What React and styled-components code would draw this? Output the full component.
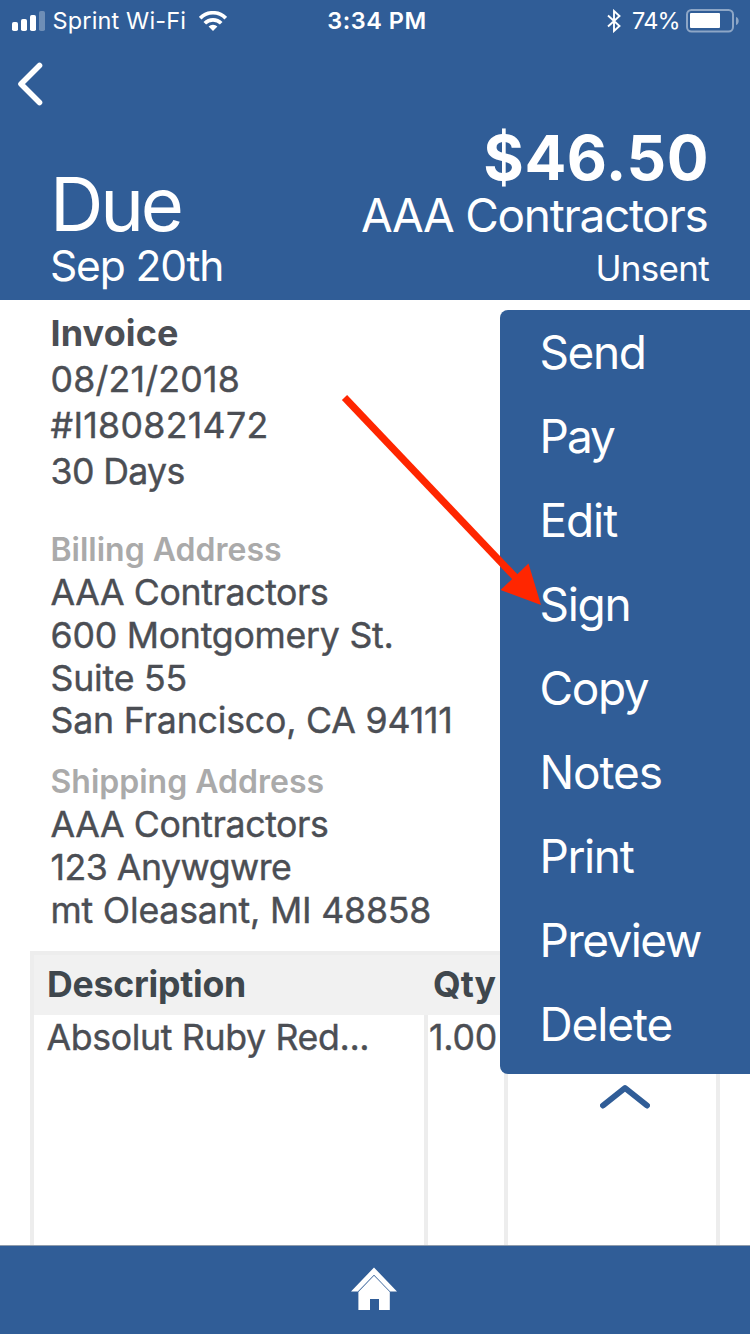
import styled, { createGlobalStyle } from 'styled-components';

const menuItems = [
    { label: 'Send', spacing: -1.4 },
    { label: 'Pay', spacing: -2 },
    { label: 'Edit', spacing: -1.1 },
    { label: 'Sign', spacing: -1.3 },
    { label: 'Copy', spacing: -1.4 },
    { label: 'Notes', spacing: -1.1 },
    { label: 'Print', spacing: -1.4 },
    { label: 'Preview', spacing: -1.6 },
    { label: 'Delete', spacing: -1.1 },
];

const App = () => {
    return (
        <>
            <GlobalStyle />
            <Page>
                <Header>
                    <StatusBar>
                        <Carrier>
                            <SignalIcon />
                            <Text size={23.5} line={40} spacing={0.15}>Sprint Wi-Fi</Text>
                            <WifiIcon />
                        </Carrier>
                        <Clock size={23.5} line={40} weight={600} spacing={0.5}>3:34 PM</Clock>
                        <Battery>
                            <BluetoothIcon />
                            <Text size={23.5} line={40} spacing={-0.7}>74%</Text>
                            <BatteryIcon />
                        </Battery>
                    </StatusBar>
                    <BackButton aria-label="Back">
                        <svg width="28" height="44" viewBox="0 0 28 44">
                            <path d="M23.5 3.5L5 22L23.5 40.5" fill="none" stroke="#fff" strokeWidth="5.6" strokeLinecap="round" strokeLinejoin="round" />
                        </svg>
                    </BackButton>
                    <Summary>
                        <DueDate>
                            <Text size={74} line={76} spacing={-3.2}>Due</Text>
                            <Text size={42.5} line={48} spacing={-1.15}>Sep 20th</Text>
                        </DueDate>
                        <Totals>
                            <Text size={62} line={60} weight={700} spacing={0.5}>$46.50</Text>
                            <Client size={46} line={55} spacing={-1.3}>AAA Contractors</Client>
                            <Text size={35} line={51} spacing={-0.7}>Unsent</Text>
                        </Totals>
                    </Summary>
                </Header>
                <Body>
                    <Block>
                        <Text size={36} line={46} weight={700} spacing={0.1}>Invoice</Text>
                        <BodyText line={46} spacing={0.2}>08/21/2018</BodyText>
                        <BodyText line={46} spacing={0.3}>#I180821472</BodyText>
                        <BodyText line={46} spacing={-0.65}>30 Days</BodyText>
                    </Block>
                    <Block gap={34}>
                        <Label>Billing Address</Label>
                        <BodyText spacing={-0.4}>AAA Contractors</BodyText>
                        <BodyText spacing={-0.25}>600 Montgomery St.</BodyText>
                        <BodyText spacing={-0.2}>Suite 55</BodyText>
                        <BodyText spacing={-0.2}>San Francisco, CA 94111</BodyText>
                    </Block>
                    <Block gap={18}>
                        <Label>Shipping Address</Label>
                        <BodyText spacing={-0.4}>AAA Contractors</BodyText>
                        <BodyText spacing={-0.5}>123 Anywgwre</BodyText>
                        <BodyText spacing={-0.2}>mt Oleasant, MI 48858</BodyText>
                    </Block>
                    <Table>
                        <HeadRow>
                            <HeadCell pad={13}><Text size={35.7} line={58} weight={700} spacing={-0.25}>Description</Text></HeadCell>
                            <HeadCell pad={9}><Text size={35.7} line={58} weight={700} spacing={0}>Qty</Text></HeadCell>
                            <HeadCell />
                        </HeadRow>
                        <ItemRow>
                            <Cell pad={12.5}><BodyText line={44} spacing={-0.35}>Absolut Ruby Red...</BodyText></Cell>
                            <Cell pad={1}><BodyText line={44} spacing={-0.2}>1.00</BodyText></Cell>
                            <Cell />
                        </ItemRow>
                    </Table>
                    <Menu>
                        <MenuList>
                            {menuItems.map(item => (
                                <MenuItem key={item.label} spacing={item.spacing}>{item.label}</MenuItem>
                            ))}
                        </MenuList>
                        <Collapse aria-label="Collapse menu">
                            <svg width="50" height="26" viewBox="0 0 50 26">
                                <path d="M3 21.5L25 4L47 21.5" fill="none" stroke="#305d97" strokeWidth="6" strokeLinecap="round" strokeLinejoin="round" />
                            </svg>
                        </Collapse>
                    </Menu>
                    <Arrow width="210" height="220" viewBox="340 390 210 220">
                        <path d="M344.5 397.5L516 578" stroke="#ff2600" strokeWidth="7.2" />
                        <path d="M528.5 563.5L541 605L500.5 590Z" fill="#ff2600" />
                    </Arrow>
                </Body>
                <Footer>
                    <svg width="48" height="44" viewBox="0 0 48 44">
                        <path d="M24 .5L1 24.5H7.8L24 7.8L40.2 24.5H47Z" fill="#fff" />
                        <path d="M24 8.8L8.4 25V43H20V32H29V43H39.8V25Z" fill="#fff" />
                    </svg>
                </Footer>
            </Page>
        </>
    )
}

const SignalIcon = () => (
    <svg width="33" height="20" viewBox="0 0 33 20">
        <g fill="#fff">
            <rect x="0" y="11" width="6" height="9" rx="1.8" />
            <rect x="9" y="8" width="6" height="12" rx="1.8" />
            <rect x="18" y="4" width="6" height="16" rx="1.8" />
            <rect x="27" y="0" width="6" height="20" rx="1.8" opacity=".3" />
        </g>
    </svg>
)

const WifiIcon = () => (
    <svg width="28" height="20" viewBox="0 0 28 20">
        <g fill="none" stroke="#fff" strokeWidth="3.7">
            <path d="M1.2 7.1A18 18 0 0 1 26.8 7.1" />
            <path d="M5.8 12.2A11.6 11.6 0 0 1 22.2 12.2" />
        </g>
        <path d="M9.6 15.6A6.2 6.2 0 0 1 18.4 15.6L14 20Z" fill="#fff" />
    </svg>
)

const BluetoothIcon = () => (
    <svg width="14" height="24" viewBox="0 0 14 24">
        <path d="M1 6.5L12.5 17L7 22V2L12.5 7L1 17.5" fill="none" stroke="#fff" strokeWidth="1.9" />
    </svg>
)

const BatteryIcon = () => (
    <svg width="54" height="24" viewBox="0 0 54 24">
        <rect x="1" y="1" width="46" height="21.5" rx="4.5" fill="none" stroke="#fff" strokeWidth="2" opacity=".45" />
        <rect x="4" y="4" width="30" height="15" rx="1" fill="#fff" />
        <path d="M50 8C53.6 9 53.6 15 50 16Z" fill="#fff" opacity=".45" />
    </svg>
)

const GlobalStyle = createGlobalStyle`
    body {
        margin: 0;
        background: #fff;
    }
`;

const Page = styled.div`
    display: flex;
    flex-direction: column;
    width: 750px;
    height: 1334px;
    overflow: hidden;
    font-family: Inter, "Liberation Sans", sans-serif;
    color: #4b4e54;
`;

const Text = styled.div.withConfig({
    shouldForwardProp: prop => !['size', 'line', 'weight', 'spacing'].includes(prop)
})`
    font-size: ${props => props.size}px;
    line-height: ${props => props.line}px;
    font-weight: ${props => props.weight || 400};
    letter-spacing: ${props => props.spacing}px;
    white-space: nowrap;
`;

const BodyText = styled(Text)`
    font-size: 35.7px;
    line-height: ${props => props.line || 42.75}px;
    -webkit-text-stroke: 0.4px currentColor;
`;

const Clock = styled(Text)`
    padding-left: 2px;
`;

const Client = styled(Text)`
    padding-right: 1.5px;
`;

const Header = styled.header`
    height: 300px;
    flex-shrink: 0;
    box-sizing: border-box;
    background: #305d97;
    color: #fff;
`;

const StatusBar = styled.div`
    display: grid;
    grid-template-columns: 1fr auto 1fr;
    align-items: center;
    height: 40px;
    padding: 0 10px 0 12px;
    ${Text} {
        padding-top: 1px;
    }
`;

const Carrier = styled.div`
    display: flex;
    align-items: center;
    gap: 7.5px;
    svg:last-child {
        margin-left: 5px;
    }
`;

const Battery = styled.div`
    display: flex;
    align-items: center;
    justify-content: flex-end;
    gap: 6px;
    ${Text} {
        margin-left: 5px;
    }
`;

const BackButton = styled.button`
    display: flex;
    align-items: center;
    height: 88px;
    padding: 0 0 0 16px;
    border: 0;
    background: none;
`;

const Summary = styled.div`
    display: flex;
    justify-content: space-between;
    padding: 0 41px 0 50px;
`;

const DueDate = styled.div`
    padding-top: 38px;
`;

const Totals = styled.div`
    text-align: right;
`;

const Body = styled.main`
    position: relative;
    flex: 1;
    display: flex;
    flex-direction: column;
    padding-top: 10px;
`;

const Block = styled.section.withConfig({
    shouldForwardProp: prop => prop !== 'gap'
})`
    margin-top: ${props => props.gap || 0}px;
    padding-left: 50.5px;
`;

const Label = styled.div`
    font-size: 32px;
    line-height: 43px;
    font-weight: 600;
    color: #aaa;
`;

const Table = styled.div`
    display: flex;
    flex-direction: column;
    flex: 1;
    width: 690px;
    margin: 20px 0 0 30px;
    box-sizing: border-box;
    border: solid #ededed;
    border-width: 4px 4px 0;
`;

const HeadRow = styled.div`
    display: grid;
    grid-template-columns: 390px 80px 1fr;
    height: 60px;
    background: #f1f1f1;
    color: #3f474d;
`;

const ItemRow = styled(HeadRow)`
    flex: 1;
    background: #fff;
    color: #4b4e54;
`;

const HeadCell = styled.div.withConfig({
    shouldForwardProp: prop => prop !== 'pad'
})`
    padding-left: ${props => props.pad || 0}px;
`;

const Cell = styled(HeadCell)`
    border-right: 4px solid #ededed;
    &:first-child {
        margin-right: -4px;
    }
    &:nth-child(2) {
        margin: 0 -4px 0 4px;
    }
    &:last-child {
        border-right: 0;
    }
`;

const Menu = styled.nav`
    position: absolute;
    top: 10px;
    right: 0;
    width: 250px;
`;

const MenuList = styled.ul`
    height: 764px;
    margin: 0;
    padding: 0 0 0 39.5px;
    box-sizing: border-box;
    list-style: none;
    border-radius: 8px 0 0 8px;
    background: #305d97;
`;

const MenuItem = styled.li.withConfig({
    shouldForwardProp: prop => prop !== 'spacing'
})`
    height: 84px;
    line-height: 84px;
    font-size: 46px;
    letter-spacing: ${props => props.spacing}px;
    color: #fff;
`;

const Collapse = styled.button`
    display: flex;
    justify-content: center;
    width: 100%;
    padding: 10px 0 0;
    border: 0;
    background: none;
`;

const Arrow = styled.svg`
    position: absolute;
    top: 90px;
    left: 340px;
`;

const Footer = styled.footer`
    display: flex;
    align-items: flex-start;
    justify-content: center;
    flex-shrink: 0;
    height: 89px;
    padding: 21px 2px 0 0;
    box-sizing: border-box;
    border-top: 1px solid #8f9cac;
    background: #305d97;
`;

export default App;
